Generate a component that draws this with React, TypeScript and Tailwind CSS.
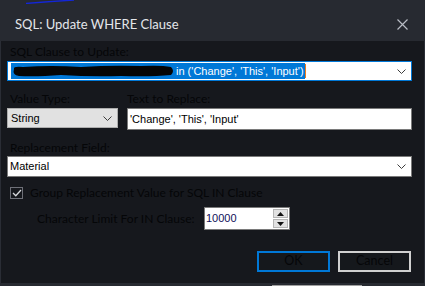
import { FC } from "react";

const Chevron: FC = () => (
  <svg width="9" height="5" viewBox="0 0 9 5" className="shrink-0">
    <path d="M0.5 0.5 L4.5 4.5 L8.5 0.5" fill="none" stroke="#3c3c3c" strokeWidth="1" />
  </svg>
);

const Label: FC<{ text: string; className?: string }> = ({ text, className = "" }) => (
  <div className={`h-[16px] leading-[16px] text-[12px] text-[#050608] whitespace-nowrap ${className}`}>{text}</div>
);

const App = () => (
  <div className="relative w-[425px] h-[286px] flex flex-col bg-[#272a31] font-['Lato',sans-serif] overflow-hidden">
    {/* stray arc peeking over the top */}
    <svg className="absolute left-[25px] top-0" width="50" height="4" viewBox="0 0 50 4">
      <path d="M1 3.5 Q25 1.5 49 0" fill="none" stroke="#1326d8" strokeWidth="1.3" />
    </svg>

    <div className="h-[41px] flex items-center justify-between pl-[15px] pr-[17px] pt-[8px]">
      <span className="text-[13px] text-[#e4e6ea]">SQL: Update WHERE Clause</span>
      <svg width="11" height="11" viewBox="0 0 11 11">
        <path d="M0.5 0.5 L10.5 10.5 M10.5 0.5 L0.5 10.5" stroke="#b8bcc4" strokeWidth="1.2" />
      </svg>
    </div>

    <div className="flex-1 flex flex-col bg-[#16181d] border-l border-r border-[#2a2d35] pl-[6px] mb-[3px]">
      <Label text="SQL Clause to Update:" className="mt-[3px] ml-[3px]" />
      <div className="mt-[1px] w-[405px] h-[20px] bg-white border border-[#0078d7] flex items-center pl-[2px] pr-[5px]">
        <div className="h-[16px] flex items-center bg-[#0078d7] border-l-[1px] border-white">
          <svg width="164" height="14" viewBox="0 0 164 14" className="shrink-0">
            <path
              d="M3 5 Q2 2 12 3 Q40 1 70 3 Q100 1 130 2 Q150 1 160 3 Q164 7 160 11 Q140 13 110 12 Q80 13 50 11 Q25 13 8 12 Q1 11 3 5 Z"
              fill="#050505"
            />
          </svg>
          <span className="font-['Liberation_Sans',sans-serif] text-[11px] text-white whitespace-pre pl-[1px] pr-[1px] leading-[16px]">
            in ('Change', 'This', 'Input')
          </span>
        </div>
        <div className="w-[1px] h-[14px] bg-[#f07b1a]" />
        <div className="flex-1" />
        <Chevron />
      </div>

      <div className="mt-[10px] flex w-[405px]">
        <Label text="Value Type:" className="ml-[3px] w-[117px]" />
        <Label text="Text to Replace:" />
      </div>
      <div className="mt-[1px] flex items-start w-[405px] gap-[9px]">
        <div className="w-[111px] h-[20px] bg-[#e1e1e1] border border-[#adadad] flex items-center justify-between pl-[3px] pr-[5px]">
          <span className="font-['Liberation_Sans',sans-serif] text-[11px] text-black">String</span>
          <Chevron />
        </div>
        <div className="flex-1 h-[22px] bg-white border border-[#7a7a7a] flex items-center pl-[2px]">
          <span className="font-['Liberation_Sans',sans-serif] text-[11px] text-black whitespace-pre">
            'Change', 'This', 'Input'
          </span>
        </div>
      </div>

      <Label text="Replacement Field:" className="mt-[10px] ml-[3px]" />
      <div className="mt-[0px] w-[405px] h-[21px] bg-white border border-[#7a7a7a] flex items-center justify-between pl-[2px] pr-[5px]">
        <span className="font-['Liberation_Sans',sans-serif] text-[11px] text-black">Material</span>
        <Chevron />
      </div>

      <div className="mt-[10px] flex items-center ml-[3px] h-[12px]">
        <div className="w-[13px] h-[12px] border border-[#6e7078] bg-[#16181d] flex items-center justify-center">
          <svg width="10" height="8" viewBox="0 0 10 8">
            <path d="M1 4 L3.8 6.8 L9 1" fill="none" stroke="#d6d8dc" strokeWidth="1.3" />
          </svg>
        </div>
        <span className="ml-[7px] text-[12px] text-[#050608] leading-[16px] whitespace-nowrap">
          Group Replacement Value for SQL IN Clause
        </span>
      </div>

      <div className="mt-[8px] flex items-center">
        <span className="ml-[30px] w-[167px] shrink-0 text-[12px] text-[#050608] leading-[16px] whitespace-nowrap">
          Character Limit For IN Clause:
        </span>
        <div className="w-[86px] h-[23px] bg-white border border-[#7a7a7a] flex items-center justify-between pl-[1px] pr-[1px]">
          <span className="font-['Liberation_Sans',sans-serif] text-[11px] text-[#10105a]">10000</span>
          <div className="flex flex-col gap-[1px]">
            <div className="w-[15px] h-[9px] bg-[#e1e1e1] border border-[#b5b5b5] flex items-center justify-center">
              <svg width="7" height="4" viewBox="0 0 7 4">
                <path d="M0 4 L3.5 0 L7 4 Z" fill="#111" />
              </svg>
            </div>
            <div className="w-[15px] h-[9px] bg-[#e1e1e1] border border-[#b5b5b5] flex items-center justify-center">
              <svg width="7" height="4" viewBox="0 0 7 4">
                <path d="M0 0 L3.5 4 L7 0 Z" fill="#111" />
              </svg>
            </div>
          </div>
        </div>
      </div>

      <div className="mt-[21px] flex gap-[8px] ml-[250px]">
        <button className="w-[73px] h-[21px] border-2 border-[#0078d7] bg-[#15181c] text-[12.5px] text-[#050608] leading-none">
          OK
        </button>
        <button className="w-[73px] h-[21px] border-2 border-[#d0d0d0] bg-[#15181c] text-[12.5px] text-[#050608] leading-none">
          Cancel
        </button>
      </div>
    </div>
    <div className="absolute left-[272px] bottom-0 w-[90px] h-[1px] bg-[#a0a0a0]" />
  </div>
);

export default App;
